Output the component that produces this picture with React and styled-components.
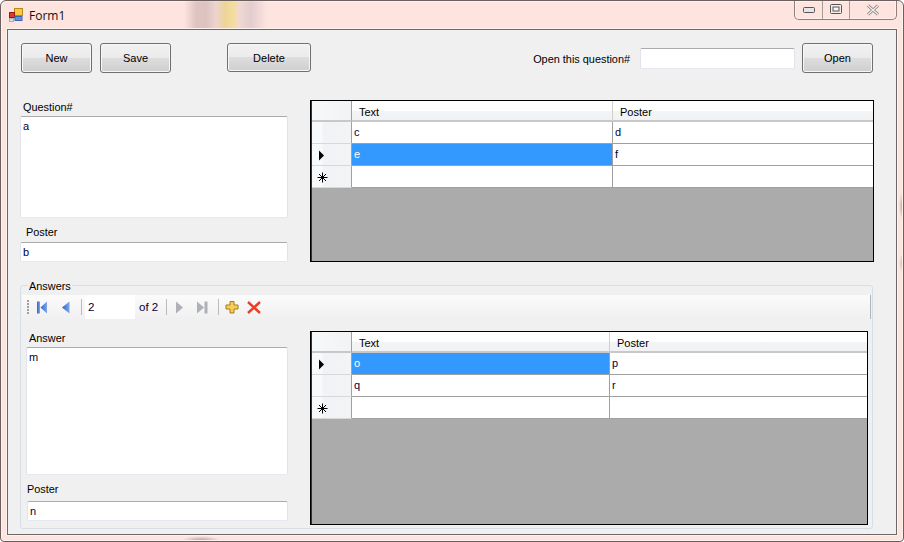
import React from "react";
import styled, { createGlobalStyle } from "styled-components";

const Global = createGlobalStyle`
  html, body { margin: 0; padding: 0; background: #fff; }
  body { font-family: "Liberation Sans", Arial, sans-serif; font-size: 11px; color: #000; }
  * { box-sizing: border-box; }
`;

const Window = styled.div`
  width: 904px;
  height: 542px;
  display: flex;
  flex-direction: column;
  border: 1px solid #6a5f5d;
  border-radius: 6px 6px 4px 4px;
  box-shadow: inset 0 0 0 1px #fff3f0;
  background:
    radial-gradient(ellipse 20px 5px at 200px 100%, rgba(110, 90, 90, 0.55), transparent),
    radial-gradient(ellipse 4px 14px at 100% 205px, rgba(110, 90, 90, 0.55), transparent),
    radial-gradient(ellipse 4px 10px at 100% 262px, rgba(110, 90, 90, 0.35), transparent),
    #fde4df;
  overflow: hidden;
`;

const TitleBar = styled.div`
  height: 28px;
  flex: none;
  display: flex;
  align-items: flex-start;
  padding-left: 8px;
  background: linear-gradient(
    90deg,
    transparent 183px,
    rgba(150, 125, 125, 0.3) 195px,
    rgba(150, 125, 125, 0.32) 205px,
    rgba(170, 150, 145, 0.2) 215px,
    rgba(230, 205, 120, 0.7) 224px,
    rgba(240, 220, 130, 0.7) 233px,
    rgba(175, 155, 160, 0.16) 238px,
    rgba(140, 130, 150, 0.24) 250px,
    transparent 266px
  );
`;

const FormIcon = styled.svg`
  width: 14px;
  height: 14px;
  margin-top: 7px;
  flex: none;
`;

const Title = styled.span`
  margin: 7px 0 0 6px;
  font-family: "Open Sans", sans-serif;
  font-size: 12px;
  line-height: 15px;
  color: #111;
`;

const Controls = styled.div`
  margin-left: auto;
  margin-top: -1px;
  margin-right: 6px;
  width: 103px;
  height: 20px;
  display: flex;
  border: 1px solid #8d7f7c;
  border-top: none;
  border-radius: 0 0 5px 5px;
  box-shadow: inset 0 0 0 1px rgba(255, 255, 255, 0.55);
`;

const ControlButton = styled.div`
  width: ${(p) => p.$w}px;
  display: flex;
  align-items: center;
  justify-content: center;
  border-right: ${(p) => (p.$last ? "none" : "1px solid #a99b98")};
`;

const Client = styled.div`
  width: 890px;
  height: 506px;
  margin-left: 6px;
  border: 1px solid #696969;
  box-shadow: 0 0 0 1px #fff3f0;
  background: #f0f0f0;
  padding: 13px 22px 0 12px;
`;

const TopRow = styled.div`
  display: flex;
  align-items: flex-start;
  height: 30px;
  padding-left: 1px;
`;

const Button = styled.div`
  width: ${(p) => p.$w}px;
  height: ${(p) => p.$h || 30}px;
  margin-left: ${(p) => p.$ml || 0}px;
  margin-right: ${(p) => p.$mr || 0}px;
  display: flex;
  align-items: center;
  justify-content: center;
  border: 1px solid #707070;
  border-radius: 3px;
  font-size: 11px;
  background: linear-gradient(#f2f2f2 0%, #ebebeb 48%, #dddddd 50%, #cfcfcf 100%);
  box-shadow: inset 0 0 0 1px #f7f7f7;
`;

const OpenGroup = styled.div`
  margin-left: auto;
  display: flex;
  align-items: flex-start;
`;

const OpenLabel = styled.span`
  margin-top: 9px;
  font-size: 10.9px;
  line-height: 14px;
`;

const Field = styled.div`
  width: ${(p) => (p.$w ? `${p.$w}px` : "auto")};
  height: ${(p) => p.$h}px;
  margin-left: ${(p) => p.$ml || 0}px;
  margin-top: ${(p) => p.$mt || 0}px;
  flex: none;
  padding: 3px 2px;
  background: #fff;
  border: 1px solid #e2e3ea;
  border-top-color: #ababab;
  border-bottom-color: #e3e9ef;
  border-radius: 2px;
  font-size: 11px;
  line-height: 13px;
  color: #00003a;
`;

const Upper = styled.div`
  margin-top: 27px;
  display: grid;
  grid-template-columns: 268px 564px;
  column-gap: 22px;
  height: 162px;
`;

const LeftColumn = styled.div`
  display: flex;
  flex-direction: column;
`;

const Label = styled.div`
  height: ${(p) => p.$h}px;
  padding-left: ${(p) => p.$pl || 0}px;
  padding-top: ${(p) => p.$pt || 0}px;
  font-size: 10.9px;
  line-height: 14px;
`;

const DataGrid = styled.div`
  height: 100%;
  display: flex;
  flex-direction: column;
  border: 1px solid #000;
  box-shadow: inset 1px 1px 0 #333;
  background: #ababab;
  overflow: hidden;
`;

const GridRow = styled.div`
  display: grid;
  grid-template-columns: 41px ${(p) => p.$a}px ${(p) => p.$b}px;
  height: 22px;
  flex: none;
`;

const HeaderRow = styled(GridRow)`
  height: 21px;
`;

const CornerCell = styled.div`
  border-right: 1px solid #a0a0a0;
  border-bottom: 2px solid #c8c8c8;
  background: linear-gradient(90deg, #f7f8f9, #f2f3f5);
  margin-left: 1px;
`;

const HeaderCell = styled.div`
  padding: 5px 0 0 7px;
  border-right: 1px solid #d0d0d0;
  border-bottom: 2px solid #c8c8c8;
  background: linear-gradient(#fff 0%, #fff 50%, #f3f4f6 52%, #f1f2f4 100%);
  font-size: 11px;
  line-height: 13px;
`;

const RowHeader = styled.div`
  margin-left: 1px;
  display: flex;
  align-items: center;
  padding: 2px 0 0 5px;
  border-right: 1px solid #a0a0a0;
  border-bottom: 1px solid #d8d8d8;
  background: linear-gradient(90deg, #f8f9fa 0%, #f8f9fa 25%, #f1f2f5 30%, #f3f4f6 100%);
`;

const Cell = styled.div`
  padding: 4px 0 0 2px;
  border-right: 1px solid #a0a0a0;
  border-bottom: 1px solid #a0a0a0;
  background: ${(p) => (p.$selected ? "#3399ff" : "#fff")};
  color: ${(p) => (p.$selected ? "#fff" : "#00003a")};
  font-size: 11px;
  line-height: 13px;
`;

const Group = styled.div`
  position: relative;
  margin-top: 23px;
  width: 853px;
  height: 244px;
  border: 1px solid #d6dfe6;
  border-radius: 3px;
`;

const Legend = styled.span`
  position: absolute;
  left: 7px;
  top: -6px;
  padding: 0 1px;
  background: #f0f0f0;
  font-size: 10.9px;
  line-height: 13px;
`;

const Strip = styled.div`
  margin: 9px 1px 0;
  height: 24px;
  display: flex;
  align-items: center;
  padding-left: 5px;
  border-right: 1px solid #b4b4b4;
  background: linear-gradient(#fbfbfb, #f0f0f0);
`;

const Grip = styled.div`
  width: 2px;
  height: 14px;
  margin-right: 5px;
  background: repeating-linear-gradient(#a0a0a0 0 2px, transparent 2px 3px);
`;

const StripIcon = styled.svg`
  width: 16px;
  height: 16px;
  margin-right: ${(p) => p.$mr || 0}px;
  flex: none;
`;

const Separator = styled.div`
  width: 1px;
  height: 16px;
  margin: 0 ${(p) => p.$r}px 0 ${(p) => p.$l}px;
  background: #b8bcc2;
  flex: none;
`;

const PositionBox = styled.div`
  width: 50px;
  height: 24px;
  padding: 5px 0 0 3px;
  background: #fff;
  font-size: 11.5px;
  line-height: 14px;
  color: #00003a;
`;

const OfText = styled.span`
  margin-left: 4px;
  width: 20px;
  font-size: 11.5px;
  color: #00003a;
`;

const Lower = styled.div`
  margin-top: 12px;
  padding-left: 5px;
  display: grid;
  grid-template-columns: 262px 558px;
  column-gap: 22px;
  height: 194px;
`;

const CurrentArrow = styled.svg`
  width: 7px;
  height: 11px;
  margin-left: 1px;
`;

const NewRowStar = styled.svg`
  width: 11px;
  height: 11px;
`;

function RowMark({ kind }) {
  return (
    <RowHeader>
      {kind === "current" && (
        <CurrentArrow viewBox="0 0 7 11">
          <path d="M1 0.5 L6 5.5 L1 10.5 Z" fill="#000" />
        </CurrentArrow>
      )}
      {kind === "new" && (
        <NewRowStar viewBox="0 0 11 11">
          <path d="M5.5 0.5V10.5M0.5 5.5H10.5M2 2L9 9M9 2L2 9" stroke="#000" strokeWidth="1" fill="none" />
        </NewRowStar>
      )}
    </RowHeader>
  );
}

function Table({ a, b, rows }) {
  return (
    <DataGrid>
      <HeaderRow $a={a} $b={b}>
        <CornerCell />
        <HeaderCell>Text</HeaderCell>
        <HeaderCell>Poster</HeaderCell>
      </HeaderRow>
      {rows.map((r, i) => (
        <GridRow key={i} $a={a} $b={b}>
          <RowMark kind={r.kind} />
          <Cell $selected={r.kind === "current"}>{r.text}</Cell>
          <Cell>{r.poster}</Cell>
        </GridRow>
      ))}
    </DataGrid>
  );
}

const gray = "#aeb2b6";

export default function App() {
  return (
    <>
      <Global />
      <Window>
        <TitleBar>
          <FormIcon viewBox="0 0 14 14">
            <rect x="5.5" y="0.5" width="8" height="7" fill="#f8c93e" stroke="#b88a1a" />
            <rect x="0.5" y="4.5" width="5" height="5" fill="#e03b2c" stroke="#9a1c10" />
            <rect x="6" y="8.5" width="7" height="4" fill="#5f93e0" stroke="#3a66b0" />
            <rect x="0.5" y="10.5" width="4" height="3" fill="#d8dce2" stroke="#a8acb2" />
          </FormIcon>
          <Title>Form1</Title>
          <Controls>
            <ControlButton $w={28}>
              <svg width="12" height="7" viewBox="0 0 12 7">
                <rect x="0.5" y="1.5" width="11" height="5" fill="#e8e4e8" stroke="#555" rx="1" />
              </svg>
            </ControlButton>
            <ControlButton $w={27}>
              <svg width="12" height="11" viewBox="0 0 12 11">
                <rect x="0.5" y="0.5" width="11" height="9" fill="#f3eeee" stroke="#555" rx="1" />
                <rect x="3" y="3" width="6" height="4" fill="#fdf6f5" stroke="#555" />
              </svg>
            </ControlButton>
            <ControlButton $w={46} $last>
              <svg width="14" height="12" viewBox="0 0 14 12">
                <path d="M2 1.5 L12 10.5 M12 1.5 L2 10.5" stroke="#7d7878" strokeWidth="3" fill="none" />
                <path d="M2 1.5 L12 10.5 M12 1.5 L2 10.5" stroke="#f4efef" strokeWidth="1.4" fill="none" />
              </svg>
            </ControlButton>
          </Controls>
        </TitleBar>
        <Client>
          <TopRow>
            <Button $w={71}>New</Button>
            <Button $w={71} $ml={8}>Save</Button>
            <Button $w={84} $h={29} $ml={56}>Delete</Button>
            <OpenGroup>
              <OpenLabel>Open this question#</OpenLabel>
              <Field $w={155} $h={21} $ml={10} $mt={5} />
              <Button $w={71} $ml={7} $mr={1}>Open</Button>
            </OpenGroup>
          </TopRow>

          <Upper>
            <LeftColumn>
              <Label $h={16} $pl={3}>Question#</Label>
              <Field $h={102}>a</Field>
              <Label $h={24} $pl={6} $pt={7}>Poster</Label>
              <Field $h={20}>b</Field>
            </LeftColumn>
            <Table
              a={261}
              b={261}
              rows={[
                { text: "c", poster: "d" },
                { text: "e", poster: "f", kind: "current" },
                { text: "", poster: "", kind: "new" },
              ]}
            />
          </Upper>

          <Group>
            <Legend>Answers</Legend>
            <Strip>
              <Grip />
              <svg width="0" height="0">
                <defs>
                  <linearGradient id="navBlue" x1="0" y1="0" x2="1" y2="0">
                    <stop offset="0" stopColor="#2f62c8" />
                    <stop offset="1" stopColor="#7fa8e8" />
                  </linearGradient>
                </defs>
              </svg>
              <StripIcon viewBox="0 0 16 16" $mr={7}>
                <rect x="3" y="2.5" width="3" height="12" fill="url(#navBlue)" />
                <path d="M13 2.5 L13 14.5 L6.5 8.5 Z" fill="url(#navBlue)" />
              </StripIcon>
              <StripIcon viewBox="0 0 16 16">
                <path d="M12.5 2.5 L12.5 14.5 L5 8.5 Z" fill="url(#navBlue)" />
              </StripIcon>
              <Separator $l={8} $r={3} />
              <PositionBox>2</PositionBox>
              <OfText>of 2</OfText>
              <Separator $l={7} $r={4} />
              <StripIcon viewBox="0 0 16 16" $mr={7}>
                <path d="M5 2.5 L5 14.5 L12 8.5 Z" fill={gray} />
              </StripIcon>
              <StripIcon viewBox="0 0 16 16">
                <path d="M3 2.5 L3 14.5 L10 8.5 Z" fill={gray} />
                <rect x="10.5" y="2.5" width="3" height="12" fill={gray} />
              </StripIcon>
              <Separator $l={8} $r={5} />
              <StripIcon viewBox="0 0 16 16" $mr={5}>
                <path d="M6 2.5 H10 V6 H14 V10 H10 V14 H6 V10 H2 V6 H6 Z" fill="#f7cf55" stroke="#a8781c" strokeWidth="1" />
              </StripIcon>
              <StripIcon viewBox="0 0 16 16">
                <path d="M3 3 L15 14 M15 3 L3 14" stroke="#ee3b24" strokeWidth="2.4" fill="none" />
              </StripIcon>
            </Strip>
            <Lower>
              <LeftColumn>
                <Label $h={16} $pl={3}>Answer</Label>
                <Field $h={128}>m</Field>
                <Label $h={26} $pl={1} $pt={7}>Poster</Label>
                <Field $h={20} $ml={1}>n</Field>
              </LeftColumn>
              <Table
                a={258}
                b={258}
                rows={[
                  { text: "o", poster: "p", kind: "current" },
                  { text: "q", poster: "r" },
                  { text: "", poster: "", kind: "new" },
                ]}
              />
            </Lower>
          </Group>
        </Client>
      </Window>
    </>
  );
}
